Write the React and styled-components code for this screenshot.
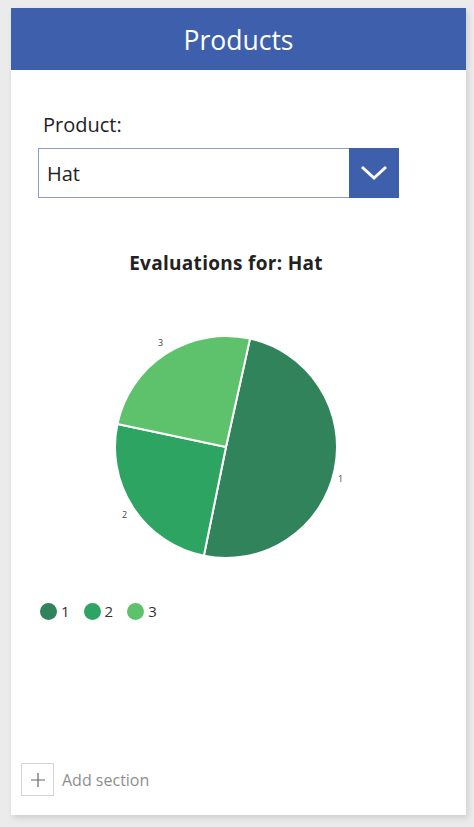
import React from 'react';
import styled, { createGlobalStyle } from 'styled-components';

const GlobalStyle = createGlobalStyle`
  html, body {
    margin: 0;
    padding: 0;
    background: #ebebeb;
  }
  body {
    font-family: "Open Sans", "Noto Sans", sans-serif;
  }
`;

const Page = styled.div`
  padding: 8px 8px 12px 11px;
  box-sizing: border-box;
  height: 827px;
`;

const Panel = styled.div`
  width: 455px;
  height: 807px;
  background: #fff;
  box-shadow: 2px 3px 6px rgba(0, 0, 0, 0.12);
  display: flex;
  flex-direction: column;
`;

const Header = styled.div`
  height: 62px;
  background: #3e5fab;
  color: #fff;
  display: flex;
  align-items: center;
  justify-content: center;
  font-size: 26.5px;
  padding-top: 2px;
  box-sizing: border-box;
`;

const Body = styled.div`
  flex: 1;
  display: flex;
  flex-direction: column;
  padding: 42px 52px 0 27px;
`;

const Label = styled.div`
  font-size: 20px;
  color: #222;
  margin-left: 5px;
  line-height: 26px;
`;

const Select = styled.div`
  margin-top: 10px;
  width: 361px;
  height: 50px;
  box-sizing: border-box;
  border: 1px solid #8a9bc4;
  display: flex;
`;

const SelectValue = styled.div`
  flex: 1;
  display: flex;
  align-items: center;
  padding-left: 8px;
  font-size: 20px;
  color: #222;
`;

const SelectButton = styled.div`
  width: 50px;
  margin: -1px -1px -1px 0;
  background: #3e5fab;
  display: flex;
  align-items: center;
  justify-content: center;
`;

const ChartTitle = styled.div`
  margin-top: 52px;
  text-align: center;
  font-size: 19px;
  font-weight: 700;
  color: #222;
  letter-spacing: 0.3px;
`;

const ChartBox = styled.div`
  margin-top: 36px;
  align-self: center;
  width: 300px;
  height: 260px;
`;

const Legend = styled.div`
  display: flex;
  gap: 14px;
  margin: 29px 0 0 2px;
`;

const LegendItem = styled.div`
  display: flex;
  align-items: center;
  gap: 4px;
  font-size: 15px;
  color: #333;
`;

const Dot = styled.span`
  width: 17px;
  height: 17px;
  border-radius: 50%;
  background: ${(p) => p.$color};
`;

const Footer = styled.div`
  margin-top: auto;
  display: flex;
  align-items: center;
  gap: 8px;
  padding: 0 0 19px 10px;
`;

const AddBox = styled.div`
  width: 33px;
  height: 33px;
  box-sizing: border-box;
  border: 1px solid #d4d4d4;
  display: flex;
  align-items: center;
  justify-content: center;
`;

const AddText = styled.span`
  font-size: 16px;
  color: #8e8e8e;
`;

const data = [
  { label: '1', value: 2, color: '#31835b', at: [262, 170] },
  { label: '2', value: 1, color: '#2ea463', at: [46, 206] },
  { label: '3', value: 1, color: '#5dc26b', at: [82, 34] },
];

const Pie = () => {
  const cx = 150;
  const cy = 135;
  const r = 111;
  const total = data.reduce((s, d) => s + d.value, 0);
  let angle = 12.5;
  const pt = (a) => {
    const t = (a * Math.PI) / 180;
    return [cx + r * Math.sin(t), cy - r * Math.cos(t)];
  };
  const slices = data.map((d) => {
    const sweep = (d.value / total) * 360 - (d.label === '1' ? 1 : -0.5);
    const start = angle;
    const end = angle + sweep;
    angle = end;
    const [x1, y1] = pt(start);
    const [x2, y2] = pt(end);
    const large = sweep > 180 ? 1 : 0;
    return { ...d, path: `M${cx},${cy} L${x1},${y1} A${r},${r} 0 ${large} 1 ${x2},${y2} Z` };
  });
  return (
    <svg width="300" height="260" viewBox="0 0 300 260">
      {slices.map((s) => (
        <path key={s.label} d={s.path} fill={s.color} stroke="#fff" strokeWidth="2" strokeLinejoin="round" />
      ))}
      {slices.map((s) => (
        <text key={'t' + s.label} x={s.at[0]} y={s.at[1]} fontSize="9" fill="#444" fontFamily="Open Sans, sans-serif">
          {s.label}
        </text>
      ))}
    </svg>
  );
};

export default function App() {
  return (
    <>
      <GlobalStyle />
      <Page>
        <Panel>
          <Header>Products</Header>
          <Body>
            <Label>Product:</Label>
            <Select>
              <SelectValue>Hat</SelectValue>
              <SelectButton>
                <svg width="28" height="18" viewBox="0 0 28 18">
                  <path d="M2 3 L14 14 L26 3" fill="none" stroke="#fff" strokeWidth="3" />
                </svg>
              </SelectButton>
            </Select>
            <ChartTitle>Evaluations for: Hat</ChartTitle>
            <ChartBox>
              <Pie />
            </ChartBox>
            <Legend>
              {data.map((d) => (
                <LegendItem key={d.label}>
                  <Dot $color={d.color} />
                  {d.label}
                </LegendItem>
              ))}
            </Legend>
          </Body>
          <Footer>
            <AddBox>
              <svg width="16" height="16" viewBox="0 0 16 16">
                <path d="M8 1 V15 M1 8 H15" stroke="#666" strokeWidth="1.2" />
              </svg>
            </AddBox>
            <AddText>Add section</AddText>
          </Footer>
        </Panel>
      </Page>
    </>
  );
}
